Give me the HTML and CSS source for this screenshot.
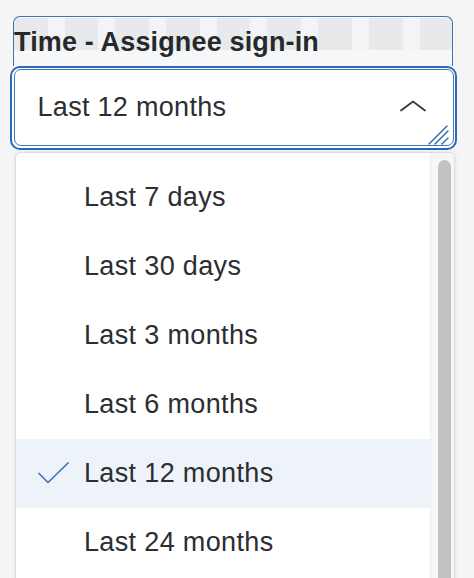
FILE: index.html
```html
<!DOCTYPE html>
<html lang="en">
<head>
<meta charset="utf-8">
<title>Time - Assignee sign-in</title>
<link rel="stylesheet" href="styles.css">
</head>
<body>
<div class="page">
  <div class="label-box">
    <span class="label-text">Time - Assignee sign-in</span>
  </div>
  <div class="select">
    <div class="select-inner">
      <span class="select-value">Last 12 months</span>
      <svg class="chevron" width="26" height="12" viewBox="0 0 26 12"><path d="M1 10.5 L13 1.5 L25 10.5" fill="none" stroke="#35383b" stroke-width="1.7" stroke-linecap="round" stroke-linejoin="round"/></svg>
      <svg class="grip" width="24" height="24" viewBox="0 0 24 24"><path d="M3 22 L21 4 M9 22 L22 9 M16 22 L22 16" fill="none" stroke="#2f6fb2" stroke-width="1.5" stroke-linecap="round"/></svg>
    </div>
  </div>
  <div class="dropdown">
    <ul class="options">
      <li class="option"><span class="check"></span><span class="opt-text">Last 7 days</span></li>
      <li class="option"><span class="check"></span><span class="opt-text">Last 30 days</span></li>
      <li class="option"><span class="check"></span><span class="opt-text">Last 3 months</span></li>
      <li class="option"><span class="check"></span><span class="opt-text">Last 6 months</span></li>
      <li class="option selected"><span class="check"><svg width="31" height="22" viewBox="0 0 31 22"><path d="M1 11.5 L10 20.5 L30 1" fill="none" stroke="#3a76b7" stroke-width="1.7" stroke-linecap="round" stroke-linejoin="round"/></svg></span><span class="opt-text">Last 12 months</span></li>
      <li class="option"><span class="check"></span><span class="opt-text">Last 24 months</span></li>
    </ul>
    <div class="scrollbar"><div class="thumb"></div></div>
  </div>
</div>
</body>
</html>
```
FILE: styles.css
```css
html, body {
  margin: 0;
  padding: 0;
  height: 100%;
  overflow: hidden;
}
body {
  background: #f5f5f5;
  font-family: "Liberation Sans", Arial, sans-serif;
  color: #2b2e32;
}
.page {
  padding-top: 16px;
  width: 474px;
}
.label-box {
  margin-left: 13px;
  width: 438px;
  height: 48.5px;
  border: 1.5px solid #3a76b5;
  border-bottom: none;
  border-radius: 7px 7px 0 0;
  background-color: #f6f7f8;
  background-image: repeating-linear-gradient(90deg, #e8e9eb 0 33.7px, #f3f4f5 33.7px 50.7px);
  background-size: 100% 32px;
  background-repeat: no-repeat;
  background-position: 0 1px;
  box-sizing: content-box;
}
.label-text {
  display: block;
  padding-top: 12px;
  font-size: 27px;
  line-height: 27px;
  font-weight: bold;
  letter-spacing: 0.15px;
  color: #26292c;
  white-space: nowrap;
}
.select {
  margin-left: 10px;
  width: 447px;
  height: 84px;
  box-sizing: border-box;
  border: 2.5px solid #2b6cb0;
  border-radius: 10px;
  padding: 1.5px;
  background: #ffffff;
}
.select-inner {
  position: relative;
  height: 100%;
  box-sizing: border-box;
  border: 1.2px solid #3b79b9;
  border-radius: 7px;
  display: flex;
  align-items: center;
  padding-left: 23px;
  padding-right: 27px;
}
.select-value {
  font-size: 27px;
  letter-spacing: 0.3px;
  color: #2b2e32;
  flex: 1;
  padding-bottom: 1px;
}
.chevron {
  display: block;
  margin-top: -4px;
}
.grip {
  position: absolute;
  right: 3px;
  bottom: -1px;
}
.dropdown {
  margin-top: 2px;
  margin-left: 15px;
  width: 440px;
  height: 440px;
  box-sizing: border-box;
  border: 1px solid #dcdcdc;
  border-radius: 6px 6px 0 0;
  background: #ffffff;
  box-shadow: 0 0 5px rgba(0, 0, 0, 0.08);
  display: flex;
  overflow: hidden;
}
.options {
  list-style: none;
  margin: 0;
  padding: 10px 0 0 0;
  flex: 1;
}
.option {
  height: 69px;
  display: flex;
  align-items: center;
  padding-left: 22px;
}
.option.selected {
  background: #eef3f9;
}
.check {
  width: 31px;
  height: 22px;
  margin-right: 15px;
  display: flex;
  align-items: center;
}
.check svg {
  display: block;
}
.opt-text {
  font-size: 27px;
  letter-spacing: 0.35px;
  color: #2b2e32;
}
.scrollbar {
  width: 24px;
  box-sizing: border-box;
  padding: 7px 3px 0 7px;
  background: #f7f7f7;
  border-left: 1px solid #eeeeee;
}
.thumb {
  width: 13px;
  height: 500px;
  border-radius: 7px;
  background: #c2c2c2;
}
```
